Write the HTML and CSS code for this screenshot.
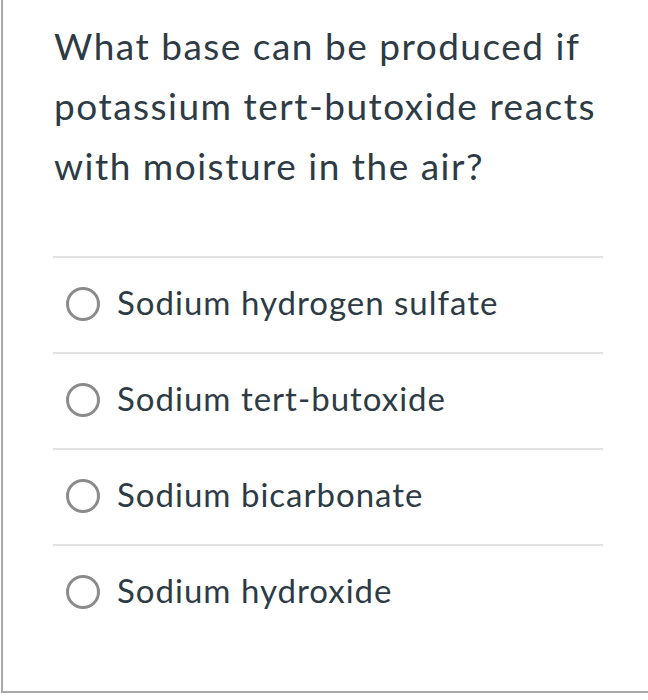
FILE: index.html
```html
<!DOCTYPE html>
<html lang="en">
<head>
<meta charset="utf-8">
<title>Quiz question</title>
<link rel="stylesheet" href="styles.css">
</head>
<body>
<div class="frame">
  <div class="question">
    <p class="prompt">What base can be produced if potassium tert-butoxide reacts with moisture in the air?</p>
    <ul class="answers">
      <li class="answer"><span class="radio"></span><span class="label">Sodium hydrogen sulfate</span></li>
      <li class="answer"><span class="radio"></span><span class="label">Sodium tert-butoxide</span></li>
      <li class="answer"><span class="radio"></span><span class="label">Sodium bicarbonate</span></li>
      <li class="answer"><span class="radio"></span><span class="label">Sodium hydroxide</span></li>
    </ul>
  </div>
</div>
</body>
</html>
```

FILE: styles.css
```css
html, body {
  margin: 0;
  padding: 0;
  background: #ffffff;
}
body {
  font-family: Lato, "Open Sans", "Liberation Sans", sans-serif;
  color: #2d3b45;
}
.frame {
  box-sizing: border-box;
  width: 648px;
  height: 693px;
  margin-left: 1px;
  border-left: 2px solid #a9a9a9;
  border-bottom: 2px solid #a9a9a9;
  background: #fff;
}
.question {
  padding: 16px 46px 0 50px;
}
.prompt {
  margin: 0;
  padding-left: 1px;
  font-size: 37px;
  line-height: 60px;
  letter-spacing: 1.5px;
}
.answers {
  list-style: none;
  margin: 60px 0 0 0;
  padding: 0;
}
.answer {
  display: flex;
  align-items: center;
  height: 96px;
  box-sizing: border-box;
  border-top: 2px solid #e2e2e2;
  padding-left: 13px;
  padding-bottom: 2px;
}
.radio {
  box-sizing: border-box;
  width: 34px;
  height: 34px;
  border: 3px solid #8b8b8b;
  border-radius: 50%;
  flex: none;
  margin-right: 17px;
}
.label {
  font-size: 33px;
  line-height: 40px;
  letter-spacing: 1px;
  margin-bottom: 4px;
}
```
